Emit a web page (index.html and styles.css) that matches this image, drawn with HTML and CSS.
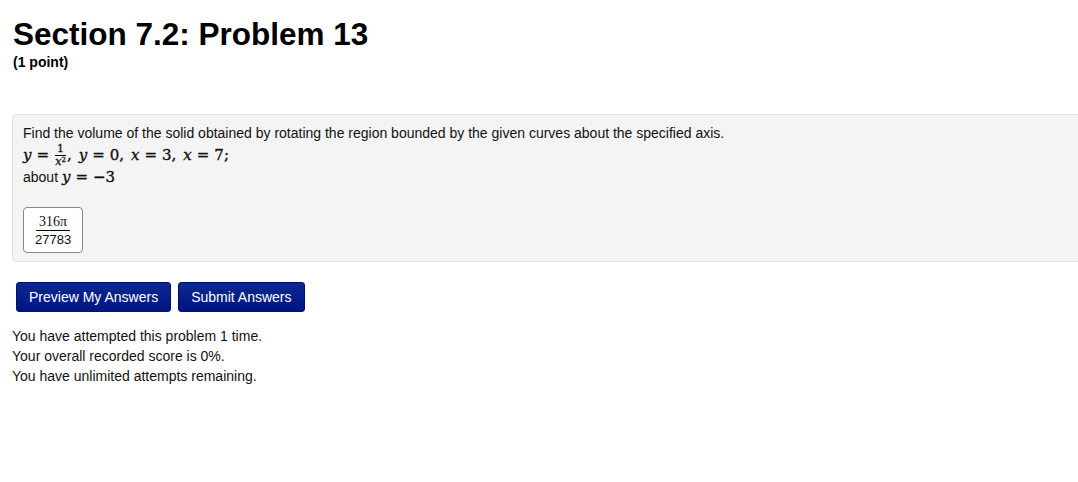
FILE: index.html
```html
<!DOCTYPE html>
<html>
<head>
<meta charset="utf-8">
<link rel="stylesheet" href="styles.css">
</head>
<body>
<div class="page">
  <h1 class="title">Section 7.2: Problem 13</h1>
  <div class="points">(1 point)</div>
  <div class="problem">
    <div class="line">Find the volume of the solid obtained by rotating the region bounded by the given curves about the specified axis.</div>
    <div class="line math-line">
      <span class="mi">y</span><span class="mo">=</span><span class="frac"><span class="num">1</span><span class="den"><span class="mi">x</span><sup>2</sup></span></span><span class="mp">,</span>
      <span class="mi">y</span><span class="mo">=</span><span class="mn">0</span><span class="mp">,</span>
      <span class="mi">x</span><span class="mo">=</span><span class="mn">3</span><span class="mp">,</span>
      <span class="mi">x</span><span class="mo">=</span><span class="mn">7</span><span class="mp">;</span>
    </div>
    <div class="line">about <span class="mi">y</span><span class="mo">=</span><span class="mn">−3</span></div>
    <div class="answer">
      <div class="afrac"><span class="anum">316π</span><span class="aden">27783</span></div>
    </div>
  </div>
  <div class="buttons">
    <button class="btn">Preview My Answers</button>
    <button class="btn">Submit Answers</button>
  </div>
  <div class="status">
    <div>You have attempted this problem 1 time.</div>
    <div>Your overall recorded score is 0%.</div>
    <div>You have unlimited attempts remaining.</div>
  </div>
</div>
</body>
</html>
```
FILE: styles.css
```css
html, body {
  margin: 0;
  padding: 0;
  background: #fff;
}
body {
  font-family: "Liberation Sans", Arial, sans-serif;
  color: #000;
  overflow: hidden;
}
.page {
  padding: 16px 0 0 12px;
}
.title {
  font-size: 31.5px;
  font-weight: bold;
  line-height: 36px;
  margin: 0 0 0 1px;
}
.points {
  font-size: 14px;
  font-weight: bold;
  line-height: 16px;
  margin: 2px 0 0 1px;
}
.problem {
  margin-top: 44px;
  margin-right: -20px;
  background: #f4f4f4;
  border: 1px solid #e3e3e3;
  border-radius: 4px;
  padding: 8px 10px 8px 10px;
  font-size: 14px;
  color: #111;
}
.line {
  line-height: 20px;
}
.math-line {
  height: 24px;
  line-height: 24px;
}
.mi, .mn, .mp, .mo {
  font-family: "DejaVu Serif", "Liberation Serif", serif;
  font-size: 15px;
  -webkit-text-stroke: 0.35px #111;
}
.mi {
  font-style: italic;
}
.mp {
  margin-right: 3px;
}
.mo {
  margin: 0 5px;
}
.frac {
  display: inline-flex;
  flex-direction: column;
  align-items: center;
  vertical-align: 8px;
  font-family: "DejaVu Serif", "Liberation Serif", serif;
  font-size: 11px;
  line-height: 10px;
  margin: 0 1px;
  -webkit-text-stroke: 0.3px #111;
}
.frac .num {
  border-bottom: 1px solid #000;
  padding: 0 2px 1px;
}
.frac .den {
  padding-top: 1px;
}
.frac .den .mi {
  font-size: 11px;
  -webkit-text-stroke: 0.3px #111;
}
.frac sup {
  font-size: 7px;
  vertical-align: 3px;
  line-height: 0;
}
.answer {
  margin-top: 20px;
  display: inline-block;
  background: #fff;
  border: 1px solid #888;
  border-radius: 4px;
  padding: 6px 11px 4px 11px;
}
.afrac {
  display: flex;
  flex-direction: column;
  align-items: center;
  font-size: 13px;
  line-height: 16px;
}
.anum {
  font-family: "Liberation Serif", serif;
  border-bottom: 1px solid #000;
  padding: 0 3px 0;
  font-size: 14px;
}
.aden {
  padding-top: 1px;
}
.buttons {
  display: flex;
  gap: 7px;
  margin: 20px 0 0 4px;
}
.btn {
  font-family: "Liberation Sans", Arial, sans-serif;
  font-size: 14px;
  color: #fff;
  background: linear-gradient(#0b2a8f, #001483);
  border: 1px solid #00106b;
  border-radius: 3px;
  height: 30px;
  padding: 0 12px;
  cursor: pointer;
}
.status {
  margin-top: 14px;
  font-size: 14px;
  line-height: 20px;
  color: #111;
}
```
